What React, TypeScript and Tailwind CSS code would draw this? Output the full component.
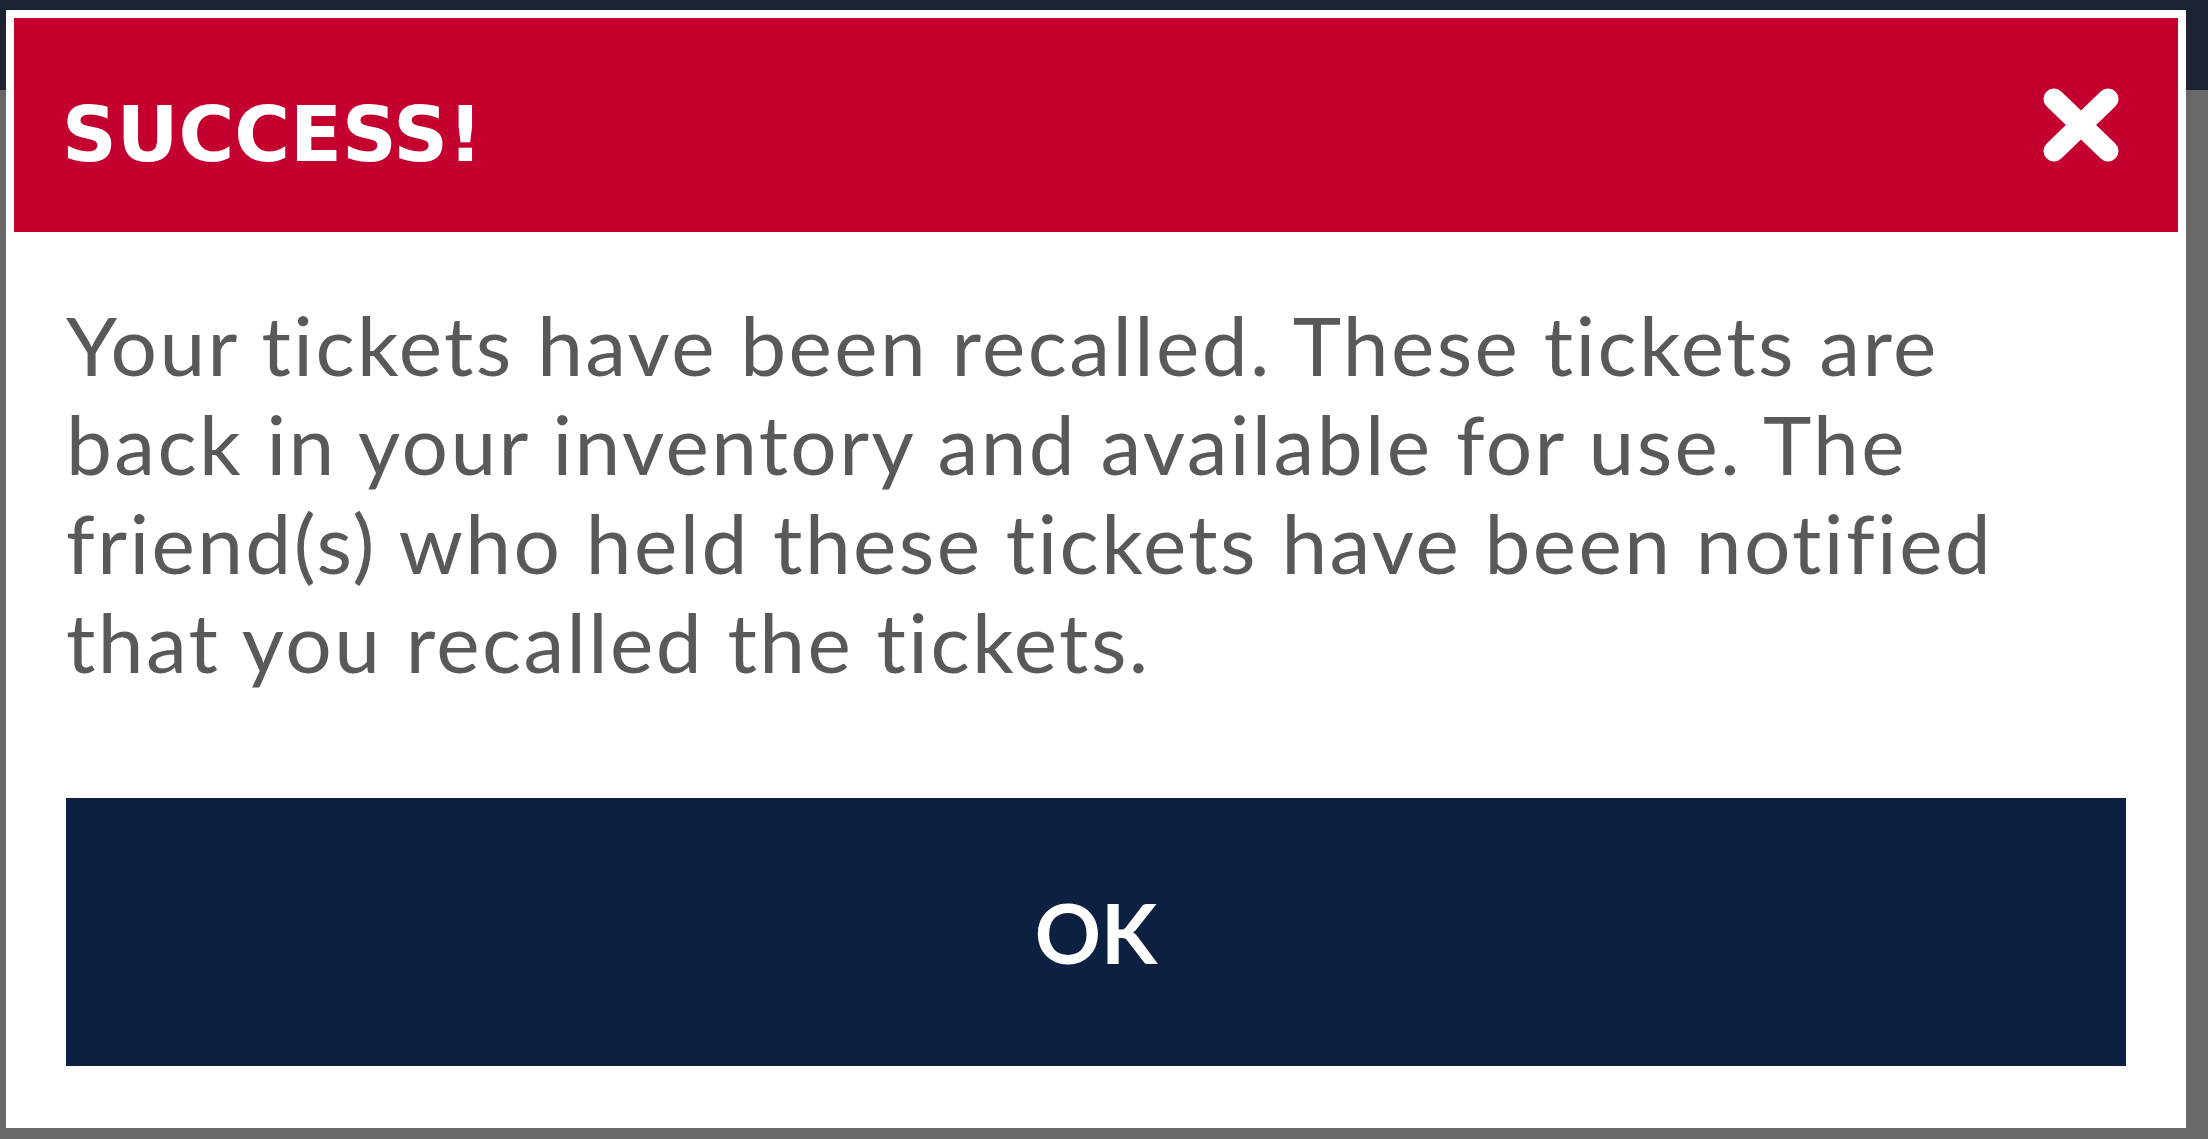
import React from "react";

function CloseIcon() {
  return (
    <svg width="78" height="74" viewBox="0 0 78 74" aria-hidden="true">
      <g stroke="#ffffff" strokeWidth="21" strokeLinecap="round" strokeLinejoin="round">
        <line x1="12" y1="11" x2="66" y2="63" />
        <line x1="66" y1="11" x2="12" y2="63" />
      </g>
    </svg>
  );
}

export default function App() {
  return (
    <div className="relative h-screen w-full overflow-hidden bg-[#686868]">
      {/* dimmed page behind the dialog */}
      <div className="h-[90px] w-full bg-[#1b2231]" />

      {/* dialog */}
      <div className="absolute left-[6px] top-[10px] flex w-[2180px] flex-col bg-white pt-[8px] pb-[62px]">
        <div className="mx-[8px] flex h-[214px] items-center justify-between bg-[#c4002f] pl-[48px] pr-[58px]">
          <h2 className="mt-[20px] font-['DejaVu_Sans',sans-serif] text-[76px] font-bold leading-[76px] text-white">
            SUCCESS!
          </h2>
          <button type="button" aria-label="Close" className="flex items-center justify-center">
            <CloseIcon />
          </button>
        </div>

        <div className="px-[60px] pt-[63px]">
          <p className="font-['Lato',sans-serif] text-[82px] leading-[99px] tracking-[2.4px] text-[#595959]">
            Your tickets have been recalled. These tickets are
            <br />
            back in your inventory and available for use. The
            <br />
            friend(s) who held these tickets have been notified
            <br />
            that you recalled the tickets.
          </p>

          <button
            type="button"
            className="mt-[107px] flex h-[268px] w-full items-center justify-center bg-[#0c2141] font-['Lato',sans-serif] text-[82px] font-bold text-white"
          >
            OK
          </button>
        </div>
      </div>
    </div>
  );
}
